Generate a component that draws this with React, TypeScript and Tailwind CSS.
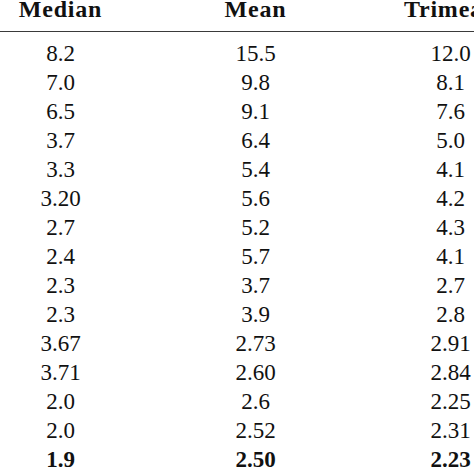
import React from "react";

const rows: [string, string, string][] = [
  ["8.2", "15.5", "12.0"],
  ["7.0", "9.8", "8.1"],
  ["6.5", "9.1", "7.6"],
  ["3.7", "6.4", "5.0"],
  ["3.3", "5.4", "4.1"],
  ["3.20", "5.6", "4.2"],
  ["2.7", "5.2", "4.3"],
  ["2.4", "5.7", "4.1"],
  ["2.3", "3.7", "2.7"],
  ["2.3", "3.9", "2.8"],
  ["3.67", "2.73", "2.91"],
  ["3.71", "2.60", "2.84"],
  ["2.0", "2.6", "2.25"],
  ["2.0", "2.52", "2.31"],
  ["1.9", "2.50", "2.23"],
];

const headers = ["Median", "Mean", "Trimean"];

const App = () => {
  return (
    <div className="w-[474px] h-[474px] overflow-hidden bg-white text-[#111] font-['Liberation_Serif',serif]">
      <div className="w-[600px] ml-[-37px]">
        {/* header */}
        <div className="flex pb-[13px] border-b-[1.5px] border-[#3a3a3a]">
          {headers.map((h) => (
            <div key={h} className="w-[195px] text-center font-bold text-[24px] tracking-[0.8px] leading-[18px]">
              {h}
            </div>
          ))}
        </div>

        {/* body */}
        <div className="pt-[6.5px]">
          {rows.map((r, i) => {
            const last = i === rows.length - 1;
            return (
              <div key={i} className={"flex text-[23px] leading-[29.07px]" + (last ? " font-bold" : "")}>
                {r.map((v, j) => (
                  <div key={j} className="w-[195px] text-center">
                    {v}
                  </div>
                ))}
              </div>
            );
          })}
        </div>
      </div>
    </div>
  );
};

export default App;
